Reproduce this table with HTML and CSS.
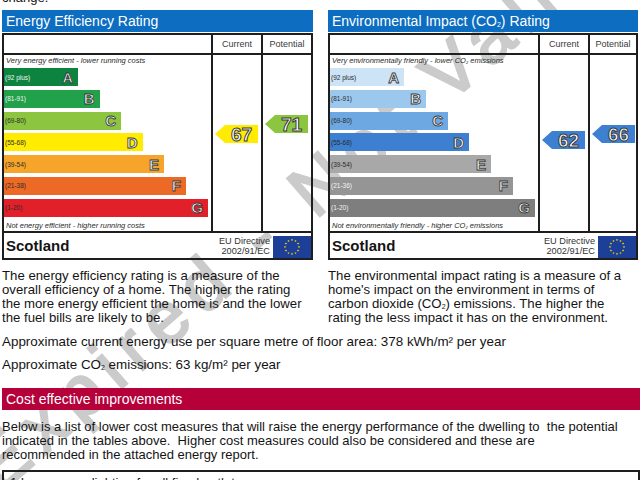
FILE: index.html
```html
<!DOCTYPE html>
<html lang="en">
<head>
<meta charset="utf-8">
<title>Energy Performance Certificate</title>
<link rel="stylesheet" href="styles.css">
</head>
<body>
<div class="page">
  <div class="watermark" aria-hidden="true">Expired - Not Valid</div>

  <p class="cut">change.</p>

  <div class="ratings">
    <section class="panel">
      <h2 class="panel-title">Energy Efficiency Rating</h2>
      <div class="chart">
        <div class="chart-grid">
          <div class="hd"></div>
          <div class="hd col">Current</div>
          <div class="hd col">Potential</div>
          <div class="scale">
            <div class="note">Very energy efficient - lower running costs</div>
            <div class="bars">
              <div class="bar ee-a light" style="width:74px"><span class="range">(92 plus)</span><span class="band">A</span></div>
              <div class="bar ee-b light" style="width:95.5px"><span class="range">(81-91)</span><span class="band">B</span></div>
              <div class="bar ee-c" style="width:117px"><span class="range">(69-80)</span><span class="band">C</span></div>
              <div class="bar ee-d" style="width:138.5px"><span class="range">(55-68)</span><span class="band">D</span></div>
              <div class="bar ee-e" style="width:160px"><span class="range">(39-54)</span><span class="band">E</span></div>
              <div class="bar ee-f" style="width:182px"><span class="range">(21-38)</span><span class="band">F</span></div>
              <div class="bar ee-g" style="width:204px"><span class="range">(1-20)</span><span class="band">G</span></div>
            </div>
            <div class="note bottom">Not energy efficient - higher running costs</div>
          </div>
          <div class="col cell"><div class="arrow ee-d" style="margin-top:70px">67</div></div>
          <div class="col cell"><div class="arrow ee-c" style="margin-top:60px">71</div></div>
        </div>
        <div class="chart-foot">
          <span class="region">Scotland</span>
          <span class="directive">EU Directive<br>2002/91/EC</span>
          <svg class="flag" viewBox="0 0 38 22" aria-hidden="true">
            <defs>
              <polygon id="eu-star" points="0,-1.3 0.3,-0.4 1.24,-0.4 0.48,0.15 0.77,1.05 0,0.5 -0.77,1.05 -0.48,0.15 -1.24,-0.4 -0.3,-0.4" fill="#ffdd00"/>
            </defs>
            <rect width="38" height="22" fill="#1d3f97"/>
            <use href="#eu-star" x="19" y="4"/><use href="#eu-star" x="22.5" y="4.94"/><use href="#eu-star" x="25.06" y="7.5"/>
            <use href="#eu-star" x="26" y="11"/><use href="#eu-star" x="25.06" y="14.5"/><use href="#eu-star" x="22.5" y="17.06"/>
            <use href="#eu-star" x="19" y="18"/><use href="#eu-star" x="15.5" y="17.06"/><use href="#eu-star" x="12.94" y="14.5"/>
            <use href="#eu-star" x="12" y="11"/><use href="#eu-star" x="12.94" y="7.5"/><use href="#eu-star" x="15.5" y="4.94"/>
          </svg>
        </div>
      </div>
    </section>

    <section class="panel env">
      <h2 class="panel-title">Environmental Impact (CO<sub>2</sub>) Rating</h2>
      <div class="chart">
        <div class="chart-grid">
          <div class="hd"></div>
          <div class="hd col">Current</div>
          <div class="hd col">Potential</div>
          <div class="scale">
            <div class="note">Very environmentally friendly - lower CO<sub>2</sub> emissions</div>
            <div class="bars">
              <div class="bar ei-a" style="width:74px"><span class="range">(92 plus)</span><span class="band">A</span></div>
              <div class="bar ei-b" style="width:96px"><span class="range">(81-91)</span><span class="band">B</span></div>
              <div class="bar ei-c" style="width:118px"><span class="range">(69-80)</span><span class="band">C</span></div>
              <div class="bar ei-d" style="width:139px"><span class="range">(55-68)</span><span class="band">D</span></div>
              <div class="bar ei-e" style="width:161px"><span class="range">(39-54)</span><span class="band">E</span></div>
              <div class="bar ei-f light" style="width:183px"><span class="range">(21-36)</span><span class="band">F</span></div>
              <div class="bar ei-g light" style="width:205px"><span class="range">(1-20)</span><span class="band">G</span></div>
            </div>
            <div class="note bottom">Not environmentally friendly - higher CO<sub>2</sub> emissions</div>
          </div>
          <div class="col cell"><div class="arrow ei-d" style="margin-top:76px">62</div></div>
          <div class="col cell"><div class="arrow ei-d" style="margin-top:70px">66</div></div>
        </div>
        <div class="chart-foot">
          <span class="region">Scotland</span>
          <span class="directive">EU Directive<br>2002/91/EC</span>
          <svg class="flag" viewBox="0 0 38 22" aria-hidden="true">
            <rect width="38" height="22" fill="#1d3f97"/>
            <use href="#eu-star" x="19" y="4"/><use href="#eu-star" x="22.5" y="4.94"/><use href="#eu-star" x="25.06" y="7.5"/>
            <use href="#eu-star" x="26" y="11"/><use href="#eu-star" x="25.06" y="14.5"/><use href="#eu-star" x="22.5" y="17.06"/>
            <use href="#eu-star" x="19" y="18"/><use href="#eu-star" x="15.5" y="17.06"/><use href="#eu-star" x="12.94" y="14.5"/>
            <use href="#eu-star" x="12" y="11"/><use href="#eu-star" x="12.94" y="7.5"/><use href="#eu-star" x="15.5" y="4.94"/>
          </svg>
        </div>
      </div>
    </section>

    <p class="desc">The energy efficiency rating is a measure of the<br>overall efficiency of a home. The higher the rating<br>the more energy efficient the home is and the lower<br>the fuel bills are likely to be.</p>
    <p class="desc">The environmental impact rating is a measure of a<br>home's impact on the environment in terms of<br>carbon dioxide (CO<sub>2</sub>) emissions. The higher the<br>rating the less impact it has on the environment.</p>
  </div>

  <p class="approx first">Approximate current energy use per square metre of floor area: 378 kWh/m² per year</p>
  <p class="approx">Approximate CO<sub>2</sub> emissions: 63 kg/m² per year</p>

  <h2 class="section-bar">Cost effective improvements</h2>
  <p class="intro">Below is a list of lower cost measures that will raise the energy performance of the dwelling to &nbsp;the potential<br>indicated in the tables above. &nbsp;Higher cost measures could also be considered and these are<br>recommended in the attached energy report.</p>

  <div class="measures">1 Low energy lighting for all fixed outlets</div>
</div>
</body>
</html>
```

FILE: styles.css
```css
html, body {
  margin: 0;
  padding: 0;
  background: #ffffff;
  overflow: hidden;
}

body {
  font-family: "Liberation Sans", Arial, Helvetica, sans-serif;
  color: #141414;
}

sub {
  line-height: 0;
}

.page {
  position: relative;
  z-index: 0;
  padding-left: 2px;
  height: 480px;
  overflow: hidden;
}

.cut {
  margin: -9px 0 0 0;
  font-size: 13px;
  line-height: 14px;
  height: 14px;
}

.ratings {
  display: grid;
  grid-template-columns: 311px 310px;
  column-gap: 15px;
  margin-top: 5px;
}

.panel-title {
  margin: 0 0 1px 0;
  height: 22px;
  line-height: 23px;
  padding-left: 4px;
  background: #0c6dc1;
  color: #ffffff;
  font-size: 14px;
  font-weight: normal;
  white-space: nowrap;
}

.panel-title sub {
  font-size: 7px;
  vertical-align: -1px;
}

.chart {
  border: 2px solid #1e1e1e;
}

.chart-grid {
  display: grid;
  grid-template-columns: 1fr 50px 50px;
  grid-template-rows: 20px 176px;
}

.env .chart-grid {
  grid-template-columns: 1fr 50px 48px;
}

.hd {
  border-bottom: 2px solid #1e1e1e;
  font-size: 9px;
  line-height: 18px;
  text-align: center;
  color: #3a3a3a;
}

.col {
  border-left: 2px solid #1e1e1e;
}

.scale {
  display: flex;
  flex-direction: column;
}

.note {
  font-size: 7.5px;
  font-style: italic;
  color: #2a2a2a;
  line-height: 12px;
  padding-left: 2px;
  white-space: nowrap;
}

.note sub {
  font-size: 4px;
  vertical-align: -1px;
}

.note.bottom {
  margin-top: auto;
  line-height: 11px;
}

.bars {
  display: flex;
  flex-direction: column;
  gap: 3.8px;
  margin-top: 1px;
}

.bar {
  height: 18px;
  display: flex;
  align-items: center;
  justify-content: space-between;
  box-sizing: border-box;
  padding: 0 5px 0 1px;
}

.range {
  font-size: 6.5px;
  color: #2b2b2b;
}

.bar.light .range {
  color: #f2f2f2;
}

.band {
  font-size: 15px;
  font-weight: bold;
  color: #ffffff;
  -webkit-text-stroke: 0.9px #3a3a3a;
  line-height: 1;
}

.cell {
  display: flex;
  flex-direction: column;
  align-items: flex-start;
}

.arrow {
  width: 43px;
  height: 18px;
  margin-left: 2px;
  box-sizing: border-box;
  padding-left: 10px;
  clip-path: polygon(0 50%, 10px 0, 100% 0, 100% 100%, 10px 100%);
  font-size: 19px;
  font-weight: bold;
  line-height: 19px;
  text-align: center;
  color: #ffffff;
  -webkit-text-stroke: 1px #3a3a3a;
}

.ee-a { background: #0c843f; }
.ee-b { background: #21a24a; }
.ee-c { background: #8cc53f; }
.ee-d { background: #ffec00; }
.ee-e { background: #f6a52a; }
.ee-f { background: #ec6a26; }
.ee-g { background: #e2202a; }

.ei-a { background: #cde3f6; }
.ei-b { background: #9dc8ee; }
.ei-c { background: #6ea8e2; }
.ei-d { background: #3d80d1; }
.ei-e { background: #a8a8a8; }
.ei-f { background: #959595; }
.ei-g { background: #7e7e7e; }

.chart-foot {
  border-top: 2px solid #1e1e1e;
  height: 25px;
  display: flex;
  align-items: center;
}

.region {
  font-size: 15px;
  font-weight: bold;
  padding-left: 2px;
  flex: 1;
}

.directive {
  font-size: 9.2px;
  line-height: 10px;
  text-align: right;
  color: #333333;
  padding-right: 3px;
}

.flag {
  width: 38px;
  height: 22px;
  align-self: flex-end;
  display: block;
}

.desc {
  margin: 9px 0 0 0;
  font-size: 13.2px;
  line-height: 14px;
  white-space: nowrap;
}

.desc sub {
  font-size: 7px;
  vertical-align: -1px;
}

.approx {
  margin: 9px 0 0 0;
  font-size: 13.4px;
  line-height: 14px;
}

.approx.first {
  margin-top: 10px;
}

.approx sub {
  font-size: 7px;
  vertical-align: -1px;
}

.section-bar {
  margin: 16px 0 0 0;
  height: 22px;
  line-height: 22px;
  background: #b5003a;
  color: #ffffff;
  font-size: 14px;
  font-weight: normal;
  padding-left: 4px;
}

.intro {
  margin: 10px 0 0 0;
  font-size: 13px;
  line-height: 14px;
  white-space: nowrap;
}

.measures {
  margin-top: 8px;
  border: 2px solid #1e1e1e;
  padding: 4px 6px;
  font-size: 13px;
  line-height: 14px;
}

.watermark {
  position: absolute;
  z-index: -1;
  left: -40px;
  top: 448px;
  transform-origin: 0 0;
  transform: rotate(-41deg);
  font-size: 72px;
  letter-spacing: 11px;
  white-space: nowrap;
  color: #cbcbcb;
  -webkit-text-stroke: 2.5px #cbcbcb;
  pointer-events: none;
  line-height: 1;
}
```
